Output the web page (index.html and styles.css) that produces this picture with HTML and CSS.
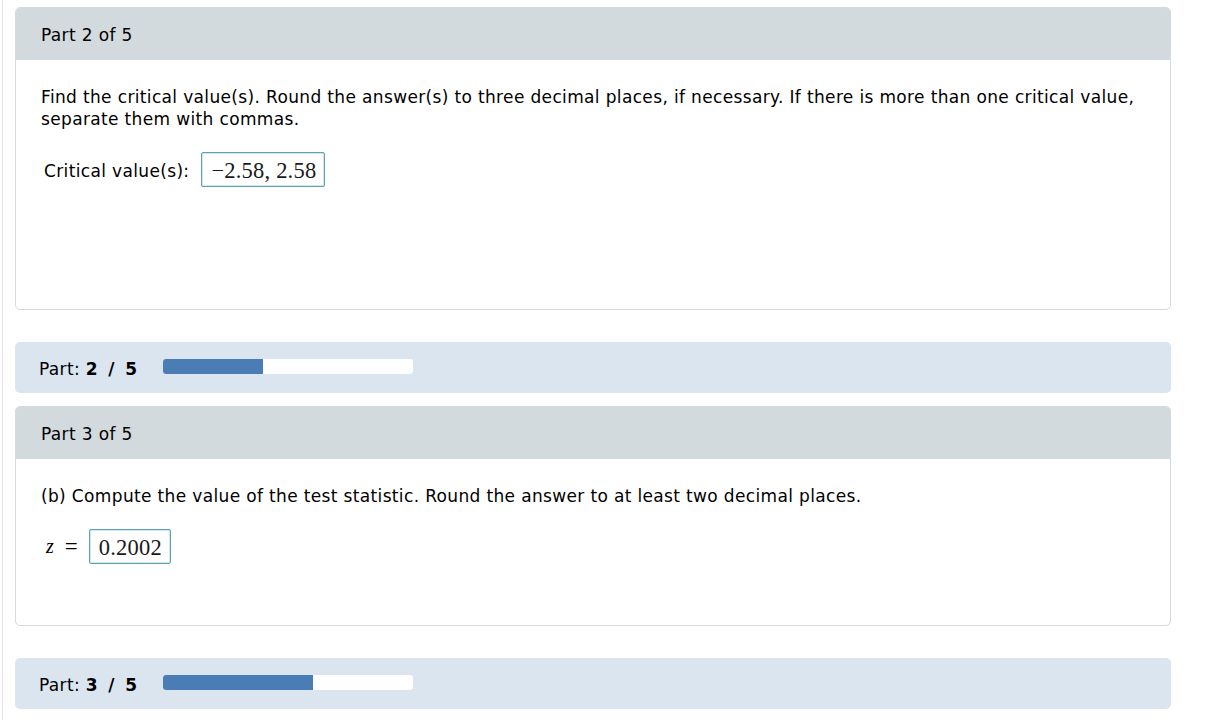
FILE: index.html
```html
<!DOCTYPE html>
<html>
<head>
<meta charset="utf-8">
<link rel="stylesheet" href="styles.css">
</head>
<body>
<div class="page">
  <div class="card">
    <div class="card-head">Part 2 of 5</div>
    <div class="card-body body-tall">
      <p class="question">Find the critical value(s). Round the answer(s) to three decimal places, if necessary. If there is more than one critical value, separate them with commas.</p>
      <div class="answer-row">
        <span class="label">Critical value(s):</span>
        <span class="answer">−2.58, 2.58</span>
      </div>
    </div>
  </div>

  <div class="progress">
    <span class="p-label">Part: <b>2 / 5</b></span>
    <div class="track"><div class="fill" style="width:40%"></div></div>
  </div>

  <div class="card">
    <div class="card-head">Part 3 of 5</div>
    <div class="card-body body-short">
      <p class="question">(b) Compute the value of the test statistic. Round the answer to at least two decimal places.</p>
      <div class="answer-row">
        <span class="math"><i>z</i><span class="eq">=</span></span>
        <span class="answer">0.2002</span>
      </div>
    </div>
  </div>

  <div class="progress">
    <span class="p-label">Part: <b>3 / 5</b></span>
    <div class="track"><div class="fill" style="width:60%"></div></div>
  </div>
</div>
</body>
</html>
```

FILE: styles.css
```css
html, body {
  margin: 0;
  padding: 0;
  background: #fff;
}
body {
  font-family: "DejaVu Sans", Verdana, sans-serif;
  font-size: 17px;
  letter-spacing: 0.35px;
  color: #000;
}
.page {
  margin-left: 2px;
  border-left: 1px solid #e4e6e7;
  padding: 7px 0 0 12px;
  width: 1156px;
  min-height: 713px;
}
.card {
  border: 1px solid #d3dbde;
  border-radius: 5px;
  overflow: hidden;
  background: #fff;
}
.card-head {
  background: #d3dadd;
  height: 52px;
  box-sizing: border-box;
  padding-top: 2px;
  display: flex;
  align-items: center;
  padding-left: 25px;
  line-height: 22px;
}
.card-body {
  padding: 26px 25px 0 25px;
}
.body-tall { height: 223px; }
.body-short { height: 140px; }
.question {
  margin: 0;
  line-height: 22px;
}
.answer-row {
  display: flex;
  align-items: center;
  margin-top: 22px;
  padding-left: 3px;
}
.label {
  margin-right: 12px;
  position: relative;
  top: 1px;
}
.answer {
  font-family: "Liberation Serif", "Times New Roman", serif;
  font-size: 22.5px;
  letter-spacing: 0.2px;
  color: #1a1a1a;
  border: 1px solid #5aa3b5;
  border-radius: 2px;
  height: 33px;
  line-height: 35px;
  padding: 0 8px 0 9px;
  box-shadow: inset 0 0 0 0.5px #a9d0d9;
}
.math {
  font-family: "Liberation Serif", "Times New Roman", serif;
  font-size: 22px;
  letter-spacing: 0;
  display: flex;
  align-items: center;
  margin-left: 2px;
  margin-right: 11px;
}
.math i { font-size: 20px; }
.eq { margin-left: 11px; font-size: 23px; }
.progress {
  margin: 32px 0 13px 0;
  height: 51px;
  background: #dae5ef;
  border-radius: 5px;
  display: flex;
  align-items: center;
  padding-left: 24px;
}
.p-label {
  width: 124px;
  position: relative;
  top: 1px;
}
.p-label b { font-weight: bold; letter-spacing: 2.4px; }
.track {
  width: 250px;
  height: 15px;
  background: #fff;
  border-radius: 3px;
  overflow: hidden;
  position: relative;
  top: -1px;
}
.fill {
  height: 100%;
  background: #4a7db5;
}
```
